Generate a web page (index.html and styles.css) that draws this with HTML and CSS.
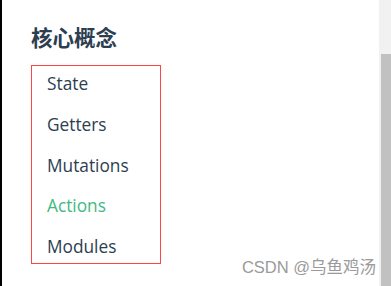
FILE: index.html
```html
<!DOCTYPE html>
<html lang="zh">
<head>
<meta charset="utf-8">
<link rel="stylesheet" href="styles.css">
</head>
<body>
<div class="page">
  <main class="content">
    <h2 class="title">核心概念</h2>
    <ul class="menu">
      <li class="item">State</li>
      <li class="item">Getters</li>
      <li class="item">Mutations</li>
      <li class="item active">Actions</li>
      <li class="item">Modules</li>
    </ul>
  </main>
  <div class="scrollbar"><div class="thumb"></div></div>
</div>
<div class="watermark">CSDN @乌鱼鸡汤</div>
</body>
</html>
```
FILE: styles.css
```css
html, body {
  margin: 0;
  padding: 0;
  background: #fff;
}
body {
  width: 391px;
  height: 286px;
  overflow: hidden;
  position: relative;
}
.page {
  display: flex;
  height: 286px;
  border-left: 2px solid #000;
  box-sizing: border-box;
}
.content {
  flex: 1;
  padding: 22px 0 0 29px;
}
.title {
  margin: 0;
  font-family: "Noto Sans CJK SC", "Microsoft YaHei", sans-serif;
  font-size: 21.5px;
  line-height: 30px;
  font-weight: 700;
  color: #2c3e50;
}
.menu {
  list-style: none;
  margin: 13px 0 0 0;
  padding: 6px 0 4px 15px;
  width: 113px;
  border: 1px solid #f44;
  display: flex;
  flex-direction: column;
  gap: 16.75px;
}
.item {
  font-family: "Open Sans", "Noto Sans", sans-serif;
  font-size: 17.3px;
  line-height: 24px;
  color: #2c3e50;
}
.item.active {
  color: #42b983;
}
.scrollbar {
  width: 12px;
  background: #f1f1f1;
  display: flex;
  flex-direction: column;
}
.thumb {
  margin: 54px 0 0 2px;
  flex: 1;
  background: #c1c1c1;
}
.watermark {
  position: absolute;
  right: 15px;
  bottom: 9px;
  font-family: "Liberation Sans", "Noto Sans CJK SC", sans-serif;
  font-size: 16.5px;
  line-height: 20px;
  color: #9a9a9a;
}
```
